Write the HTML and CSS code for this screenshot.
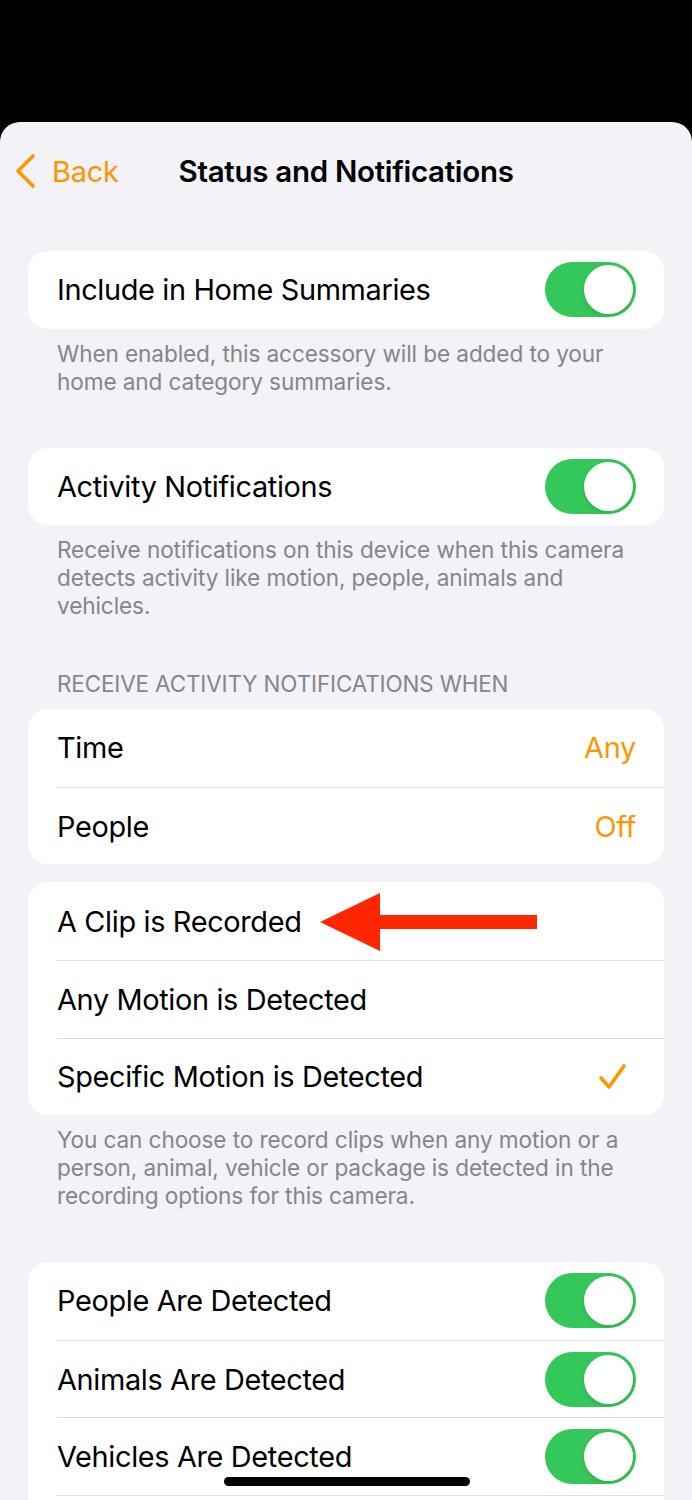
FILE: index.html
```html
<!DOCTYPE html>
<html lang="en">
  <head>
    <meta charset="UTF-8" />
    <title>Status and Notifications</title>
    <link rel="stylesheet" href="styles.css">
  </head>
  <body>
    <div class="topbar"></div>
    <div class="sheet">
      <header class="nav">
        <a class="back" href="#">
          <svg class="chevron" width="24" height="36" viewBox="0 0 24 36">
            <path d="M19 3 L4 18 L19 33" fill="none" stroke="#ff9500" stroke-width="3.6" stroke-linecap="round" stroke-linejoin="round" />
          </svg>
          <span>Back</span>
        </a>
        <h1 class="title">Status and Notifications</h1>
      </header>

      <section class="group first">
        <div class="card">
          <div class="row">
            <span class="label">Include in Home Summaries</span>
            <span class="toggle on"><span class="knob"></span></span>
          </div>
        </div>
        <p class="footer">When enabled, this accessory will be added to your home and category summaries.</p>
      </section>

      <section class="group">
        <div class="card">
          <div class="row">
            <span class="label">Activity Notifications</span>
            <span class="toggle on"><span class="knob"></span></span>
          </div>
        </div>
        <p class="footer">Receive notifications on this device when this camera detects activity like motion, people, animals and vehicles.</p>
      </section>

      <section class="group titled">
        <h2 class="group-title">Receive Activity Notifications When</h2>
        <div class="card">
          <div class="row">
            <span class="label">Time</span>
            <span class="value">Any</span>
          </div>
          <div class="row">
            <span class="label">People</span>
            <span class="value">Off</span>
          </div>
        </div>
      </section>

      <section class="group tight">
        <div class="card">
          <div class="row">
            <span class="label">A Clip is Recorded</span>
            <svg class="pointer" width="218" height="60" viewBox="0 0 218 60">
              <polygon points="0,30 60,1 60,23 217,23 217,37 60,37 60,59" fill="#ff2600" />
            </svg>
          </div>
          <div class="row">
            <span class="label">Any Motion is Detected</span>
          </div>
          <div class="row">
            <span class="label">Specific Motion is Detected</span>
            <svg class="check" width="30" height="28" viewBox="0 0 30 28">
              <path d="M3 15 L11 24 L26 3" fill="none" stroke="#ff9500" stroke-width="3.6" stroke-linecap="round" stroke-linejoin="round" />
            </svg>
          </div>
        </div>
        <p class="footer">You can choose to record clips when any motion or a person, animal, vehicle or package is detected in the recording options for this camera.</p>
      </section>

      <section class="group">
        <div class="card">
          <div class="row">
            <span class="label">People Are Detected</span>
            <span class="toggle on"><span class="knob"></span></span>
          </div>
          <div class="row">
            <span class="label">Animals Are Detected</span>
            <span class="toggle on"><span class="knob"></span></span>
          </div>
          <div class="row">
            <span class="label">Vehicles Are Detected</span>
            <span class="toggle on"><span class="knob"></span></span>
          </div>
          <div class="row"></div>
        </div>
      </section>
    </div>
    <div class="home-indicator"></div>
  </body>
</html>
```

FILE: styles.css
```css
:root {
  --bg: #f2f2f7;
  --orange: #ff9500;
  --green: #34c759;
  --secondary: #85858b;
  --separator: #dedee2;
}

html, body {
  margin: 0;
  background: #000;
}

body {
  font-family: Inter, 'Noto Sans', sans-serif;
  color: #000;
  height: 1500px;
  overflow: hidden;
  position: relative;
}

.topbar {
  height: 122px;
}

.sheet {
  background: var(--bg);
  border-radius: 20px 20px 0 0;
  min-height: 1378px;
}

.nav {
  height: 98px;
  display: flex;
  align-items: center;
  position: relative;
}

.back {
  display: flex;
  align-items: center;
  gap: 14px;
  padding-left: 14px;
  color: var(--orange);
  text-decoration: none;
  font-size: 29px;
  letter-spacing: -0.3px;
}

.title {
  margin: 0 0 0 60px;
  font-size: 29.5px;
  font-weight: 600;
  letter-spacing: -0.3px;
}

.group {
  margin-top: 52px;
}

.group.first {
  margin-top: 31px;
}

.group.titled {
  margin-top: 50px;
}

.group.tight {
  margin-top: 18px;
}

.card {
  margin: 0 28px;
  background: #fff;
  border-radius: 20px;
  overflow: hidden;
}

.row {
  height: 77.6px;
  margin-left: 29px;
  padding-right: 28px;
  display: flex;
  align-items: center;
  justify-content: space-between;
  border-top: 1px solid var(--separator);
  box-sizing: border-box;
  position: relative;
}

.row:first-child {
  border-top: none;
}

.label {
  font-size: 28.9px;
  letter-spacing: -0.35px;
}

.value {
  font-size: 28.9px;
  color: var(--orange);
  letter-spacing: -0.3px;
}

.toggle {
  width: 91px;
  height: 55px;
  border-radius: 28px;
  background: var(--green);
  position: relative;
  flex-shrink: 0;
}

.knob {
  position: absolute;
  top: 3px;
  right: 3px;
  width: 49px;
  height: 49px;
  border-radius: 50%;
  background: #fff;
  box-shadow: 0 2px 5px rgba(0, 0, 0, 0.12);
}

.pointer {
  position: absolute;
  left: 263px;
  top: 10px;
}

.check {
  margin-right: 8px;
}

.footer {
  margin: 11px 0 0;
  padding: 0 57px;
  font-size: 22.6px;
  line-height: 28px;
  color: var(--secondary);
  letter-spacing: -0.1px;
}

.group-title {
  margin: 0 0 11px;
  padding-left: 57px;
  font-size: 22.4px;
  line-height: 28px;
  font-weight: 400;
  color: var(--secondary);
  text-transform: uppercase;
  letter-spacing: -0.1px;
}

.home-indicator {
  position: absolute;
  left: 224px;
  top: 1477px;
  width: 246px;
  height: 9px;
  border-radius: 5px;
  background: #000;
}
```
